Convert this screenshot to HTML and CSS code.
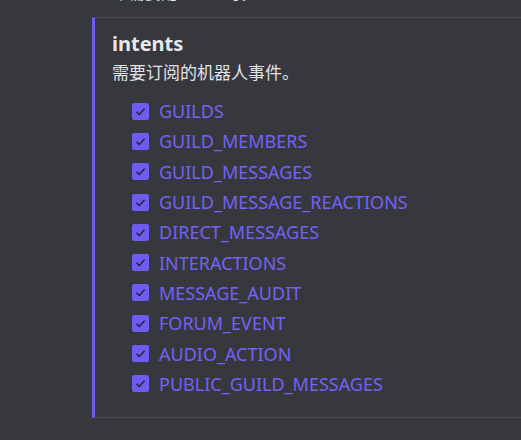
FILE: index.html
```html
<!DOCTYPE html>
<html>
<head>
<meta charset="utf-8">
<link rel="stylesheet" href="styles.css">
</head>
<body>
<p class="prev">不需要配置一个可。</p>
<section class="field">
  <h3 class="name">intents</h3>
  <p class="desc">需要订阅的机器人事件。</p>
  <ul class="opts">
    <li class="opt"><span class="box"><svg viewBox="0 0 17 17" width="17" height="17"><path d="M4.5 8.8 L7.3 11.4 L12.6 5.8" fill="none" stroke="#24232e" stroke-width="1.4"/></svg></span><span class="lbl">GUILDS</span></li>
    <li class="opt"><span class="box"><svg viewBox="0 0 17 17" width="17" height="17"><path d="M4.5 8.8 L7.3 11.4 L12.6 5.8" fill="none" stroke="#24232e" stroke-width="1.4"/></svg></span><span class="lbl">GUILD_MEMBERS</span></li>
    <li class="opt"><span class="box"><svg viewBox="0 0 17 17" width="17" height="17"><path d="M4.5 8.8 L7.3 11.4 L12.6 5.8" fill="none" stroke="#24232e" stroke-width="1.4"/></svg></span><span class="lbl">GUILD_MESSAGES</span></li>
    <li class="opt"><span class="box"><svg viewBox="0 0 17 17" width="17" height="17"><path d="M4.5 8.8 L7.3 11.4 L12.6 5.8" fill="none" stroke="#24232e" stroke-width="1.4"/></svg></span><span class="lbl">GUILD_MESSAGE_REACTIONS</span></li>
    <li class="opt"><span class="box"><svg viewBox="0 0 17 17" width="17" height="17"><path d="M4.5 8.8 L7.3 11.4 L12.6 5.8" fill="none" stroke="#24232e" stroke-width="1.4"/></svg></span><span class="lbl">DIRECT_MESSAGES</span></li>
    <li class="opt"><span class="box"><svg viewBox="0 0 17 17" width="17" height="17"><path d="M4.5 8.8 L7.3 11.4 L12.6 5.8" fill="none" stroke="#24232e" stroke-width="1.4"/></svg></span><span class="lbl">INTERACTIONS</span></li>
    <li class="opt"><span class="box"><svg viewBox="0 0 17 17" width="17" height="17"><path d="M4.5 8.8 L7.3 11.4 L12.6 5.8" fill="none" stroke="#24232e" stroke-width="1.4"/></svg></span><span class="lbl">MESSAGE_AUDIT</span></li>
    <li class="opt"><span class="box"><svg viewBox="0 0 17 17" width="17" height="17"><path d="M4.5 8.8 L7.3 11.4 L12.6 5.8" fill="none" stroke="#24232e" stroke-width="1.4"/></svg></span><span class="lbl">FORUM_EVENT</span></li>
    <li class="opt"><span class="box"><svg viewBox="0 0 17 17" width="17" height="17"><path d="M4.5 8.8 L7.3 11.4 L12.6 5.8" fill="none" stroke="#24232e" stroke-width="1.4"/></svg></span><span class="lbl">AUDIO_ACTION</span></li>
    <li class="opt"><span class="box"><svg viewBox="0 0 17 17" width="17" height="17"><path d="M4.5 8.8 L7.3 11.4 L12.6 5.8" fill="none" stroke="#24232e" stroke-width="1.4"/></svg></span><span class="lbl">PUBLIC_GUILD_MESSAGES</span></li>
  </ul>
</section>
</body>
</html>
```

FILE: styles.css
```css
html, body {
  margin: 0;
  padding: 0;
  background: #37383e;
  height: 100%;
  overflow: hidden;
}
body {
  font-family: "Noto Sans", "Noto Sans CJK SC", sans-serif;
  color: #e4e4e8;
}
.prev {
  margin: -19px 0 0 113px;
  font-size: 16px;
  line-height: 24px;
  height: 24px;
}
.field {
  margin: 12px 0 0 92px;
  border-left: 3px solid #6c5cef;
  border-top: 1px solid #4c4d54;
  border-bottom: 1px solid #4c4d54;
  padding: 12px 0 18px 17px;
}
.name {
  margin: 0;
  font-size: 20px;
  font-weight: 700;
  line-height: 28px;
  color: #e8e8ec;
}
.desc {
  margin: 3px 0 0 0;
  font-size: 17px;
  line-height: 24px;
  color: #e4e4e8;
}
.opts {
  list-style: none;
  margin: 11px 0 0 0;
  padding: 0 0 0 20px;
}
.opt {
  display: flex;
  align-items: center;
  gap: 10px;
  height: 30.3px;
}
.box {
  width: 17px;
  height: 17px;
  border-radius: 2px;
  background: #6c5cef;
  display: flex;
}
.lbl {
  font-size: 18px;
  color: #7362f5;
  line-height: 24px;
}
```
